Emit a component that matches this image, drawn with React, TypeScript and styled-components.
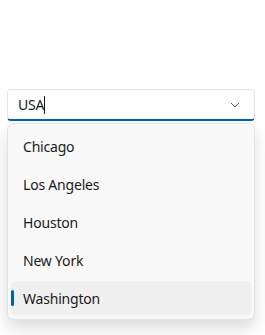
import styled, { createGlobalStyle } from "styled-components";

const cities = ["Chicago", "Los Angeles", "Houston", "New York", "Washington"];
const selected = "Washington";

const GlobalStyle = createGlobalStyle`
  html, body {
    margin: 0;
    padding: 0;
    background: #ffffff;
  }
  body {
    font-family: "Noto Sans", "Open Sans", sans-serif;
    color: #1a1a1a;
  }
`;

export default function App() {
  return (
    <StPage>
      <GlobalStyle />
      <StCombo>
        <StInput>
          <StValue>USA</StValue>
          <StCaret />
          <StChevron viewBox="0 0 10 6" aria-hidden>
            <path d="M1 1l4 4 4-4" />
          </StChevron>
        </StInput>
        <StPopup>
          {cities.map((city) => (
            <StItem key={city} $active={city === selected}>
              {city}
            </StItem>
          ))}
        </StPopup>
      </StCombo>
    </StPage>
  );
}

const StPage = styled.main`
  width: 265px;
  height: 335px;
  padding: 89px 10px 0 7px;
  box-sizing: border-box;
`;

const StCombo = styled.div`
  display: flex;
  flex-direction: column;
  gap: 2px;
  width: 248px;
`;

const StInput = styled.div`
  display: flex;
  align-items: center;
  height: 32px;
  box-sizing: border-box;
  padding: 0 14px 0 10px;
  background: #ffffff;
  border: 1px solid #e5e5e5;
  border-bottom: 2px solid #005fb8;
  border-radius: 4px;
  font-size: 14px;
`;

const StValue = styled.span`
  line-height: 20px;
  letter-spacing: -0.2px;
`;

const StCaret = styled.span`
  width: 1px;
  height: 18px;
  background: #1a1a1a;
`;

const StChevron = styled.svg`
  width: 10px;
  height: 6px;
  margin-left: auto;
  fill: none;
  stroke: #606060;
  stroke-width: 1;
`;

const StPopup = styled.div`
  display: flex;
  flex-direction: column;
  gap: 4px;
  padding: 5px 3px 4px;
  background: #f9f9f9;
  border: 1px solid #e3e3e3;
  border-radius: 7px;
  box-shadow: 0 8px 16px rgba(0, 0, 0, 0.14);
`;

const StItem = styled.div<{ $active?: boolean }>`
  position: relative;
  display: flex;
  align-items: center;
  height: 34px;
  padding-left: 12px;
  border-radius: 4px;
  font-size: 14px;
  letter-spacing: -0.2px;
  background: ${({ $active }) => ($active ? "#f0f0f0" : "transparent")};

  &::before {
    content: "";
    display: ${({ $active }) => ($active ? "block" : "none")};
    position: absolute;
    left: 0;
    top: 9px;
    width: 3px;
    height: 16px;
    border-radius: 2px;
    background: #005fb8;
  }
`;
